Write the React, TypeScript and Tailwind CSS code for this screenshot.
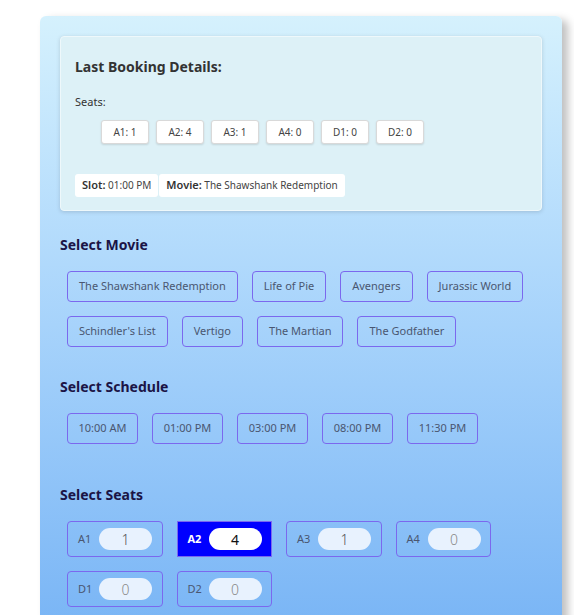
import React from "react";

const movies = [
  "The Shawshank Redemption",
  "Life of Pie",
  "Avengers",
  "Jurassic World",
  "Schindler's List",
  "Vertigo",
  "The Martian",
  "The Godfather",
];
const slots = ["10:00 AM", "01:00 PM", "03:00 PM", "08:00 PM", "11:30 PM"];
const seats: [string, number][] = [
  ["A1", 1],
  ["A2", 4],
  ["A3", 1],
  ["A4", 0],
  ["D1", 0],
  ["D2", 0],
];

export default function App() {
  return (
    <div
      className="min-h-[615px] bg-white pl-[40px] pt-[16px]"
      style={{ fontFamily: '"Noto Sans", "Open Sans", sans-serif' }}
    >
      <div className="w-[522px] min-h-[620px] rounded-[6px] bg-gradient-to-b from-[#d5f1fd] via-[#b0d9fc] via-40% to-[#78b4f5] px-[20px] pt-[20px] pb-[20px] shadow-[6px_4px_8px_rgba(0,0,0,0.25)]">
        <div className="rounded-[4px] border border-[#eef8fb] bg-[#ddf1f7] px-[14px] pt-[20px] pb-[13px] shadow-[0_1px_4px_rgba(0,0,0,0.15)]">
          <div className="text-[14px] font-bold leading-[20px] text-[#333]">Last Booking Details:</div>
          <div className="mt-[17px] text-[11px] leading-[16px] text-[#333]">Seats:</div>
          <div className="mt-[10px] flex gap-[7px] pl-[26px]">
            {seats.map(([s, n]) => (
              <div
                key={s}
                className="flex h-[24px] w-[48px] items-center justify-center rounded-[3px] border border-[#d9d9d9] bg-white text-[10px] text-[#444] shadow-[0_1px_2px_rgba(0,0,0,0.12)]"
              >
                {s}: {n}
              </div>
            ))}
          </div>
          <div className="mt-[30px] flex">
            <div className="flex h-[23px] items-center rounded-[3px] bg-white px-[7px] text-[10px] text-[#444]">
              <span className="text-[11px] font-semibold text-[#333]">Slot:</span>&nbsp;01:00 PM
            </div>
            <div className="ml-px flex h-[23px] items-center rounded-[3px] bg-white px-[7px] text-[10px] text-[#444]">
              <span className="text-[11px] font-semibold text-[#333]">Movie:</span>&nbsp;The Shawshank Redemption
            </div>
          </div>
        </div>

        <h2 className="mt-[24px] text-[14px] font-bold leading-[20px] text-[#1b1446]">Select Movie</h2>
        <div className="mt-[9px] flex flex-wrap">
          {movies.map((m) => (
            <button
              key={m}
              className="m-[7px] h-[31px] rounded-[4px] border border-[#7b68ee] px-[11px] text-[11px] text-[#4a5670]"
            >
              {m}
            </button>
          ))}
        </div>

        <h2 className="mt-[23px] text-[14px] font-bold leading-[20px] text-[#1b1446]">Select Schedule</h2>
        <div className="mt-[9px] flex flex-wrap">
          {slots.map((s) => (
            <button
              key={s}
              className="m-[7px] h-[31px] w-[71px] rounded-[4px] border border-[#7b68ee] text-[11px] text-[#4a5670]"
            >
              {s}
            </button>
          ))}
        </div>

        <h2 className="mt-[34px] text-[14px] font-bold leading-[20px] text-[#1b1446]">Select Seats</h2>
        <div className="mt-[9px] flex flex-wrap">
          {seats.map(([s, n]) => {
            const sel = s === "A2";
            return (
              <div
                key={s}
                className={
                  sel
                    ? "m-[7px] flex h-[36px] w-[95.5px] items-center border border-[#7b68ee] bg-[#0000ff] pl-[10px]"
                    : "m-[7px] flex h-[36px] w-[95.5px] items-center rounded-[4px] border border-[#7b68ee] pl-[10px]"
                }
              >
                <span className={sel ? "w-[21px] text-[11px] font-bold text-white" : "w-[21px] text-[11px] text-[#4a5670]"}>
                  {s}
                </span>
                <span
                  className={
                    sel
                      ? "flex h-[22px] w-[53px] items-center justify-center rounded-full bg-white text-[14px] text-[#111]"
                      : n > 0
                      ? "flex h-[22px] w-[53px] items-center justify-center rounded-full bg-[#e8f2fe] text-[14px] font-light text-[#555]"
                      : "flex h-[22px] w-[53px] items-center justify-center rounded-full bg-[#e8f2fe] text-[14px] font-light text-[#888]"
                  }
                >
                  {n}
                </span>
              </div>
            );
          })}
        </div>
      </div>
    </div>
  );
}
